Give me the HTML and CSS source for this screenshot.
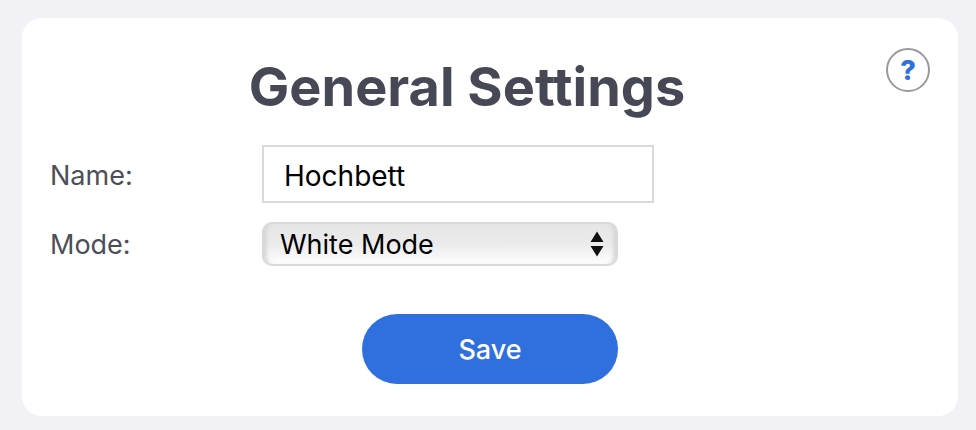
FILE: index.html
```html
<!DOCTYPE html>
<html lang="en">
<head>
<meta charset="utf-8">
<title>General Settings</title>
<link rel="stylesheet" href="styles.css">
</head>
<body>
<main class="card">
  <a class="help" href="#">?</a>
  <h1 class="title">General Settings</h1>
  <div class="row row-name">
    <label class="label">Name:</label>
    <input class="input" type="text" value="Hochbett">
  </div>
  <div class="row row-mode">
    <label class="label">Mode:</label>
    <div class="select">
      <span class="select-text">White Mode</span>
      <svg class="arrows" width="14" height="26" viewBox="0 0 14 26"><path d="M7 0.5 L13.5 11 H0.5 Z M0.5 15 H13.5 L7 25.5 Z" fill="#111"/></svg>
    </div>
  </div>
  <div class="actions"><button class="save">Save</button></div>
</main>
</body>
</html>
```
FILE: styles.css
```css
* { box-sizing: border-box; }
html, body { margin: 0; height: 100%; }
body {
  background: #f2f1f6;
  padding: 18px 18px 14px 22px;
  font-family: Inter, "Liberation Sans", sans-serif;
}
.card {
  position: relative;
  background: #fff;
  border-radius: 20px;
  height: 398px;
  padding: 0 28px;
}
.help {
  position: absolute;
  top: 30px;
  right: 28px;
  width: 44px;
  height: 44px;
  border: 2px solid #9a9a9a;
  border-radius: 50%;
  display: flex;
  align-items: center;
  justify-content: center;
  color: #2f6fde;
  font-size: 27px;
  font-weight: 800;
  text-decoration: none;
}
.title {
  margin: 0;
  padding-top: 34px;
  padding-right: 46px;
  text-align: center;
  font-size: 54px;
  line-height: 70px;
  font-weight: 700;
  color: #464855;
}
.row { display: flex; align-items: center; }
.row-name { margin-top: 23px; height: 58px; }
.row-mode { margin-top: 19px; height: 44px; }
.label { width: 212px; font-size: 27px; color: #4d4e58; }
.row-name .label { padding-top: 2px; }
.input {
  width: 392px;
  height: 58px;
  border: 2px solid #d9d9d9;
  padding: 3px 20px 0;
  font: 28px Inter, "Liberation Sans", sans-serif;
  color: #000;
  outline: none;
}
.select {
  width: 356px;
  height: 44px;
  border: 2px solid #d9d9d9;
  border-radius: 10px;
  background: linear-gradient(#e6e6e6 0%, #ebebeb 50%, #f0f0f0 62%, #fdfdfd 100%);
  box-shadow: inset 5px 0 4px -3px #d0d0d0, inset -5px 0 4px -3px #d0d0d0;
  display: flex;
  align-items: center;
  justify-content: space-between;
  padding: 0 12px 0 16px;
  font-size: 27px;
  color: #000;
}
.actions { display: flex; justify-content: center; margin-top: 48px; }
.save {
  width: 256px;
  height: 70px;
  border: 0;
  border-radius: 35px;
  background: #2f6fde;
  color: #fff;
  font: 500 27px Inter, "Liberation Sans", sans-serif;
}
```
